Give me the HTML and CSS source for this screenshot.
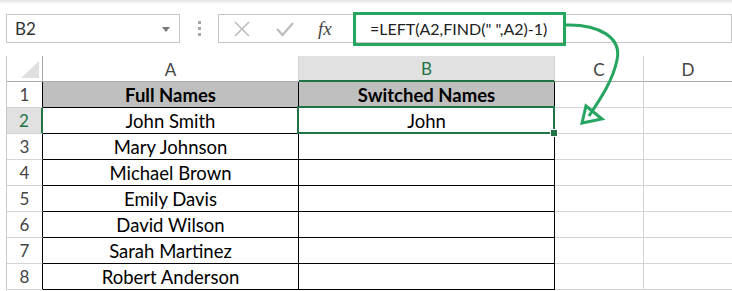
FILE: index.html
```html
<!DOCTYPE html>
<html>
<head>
  <meta charset="UTF-8">
  <title>LEFT + FIND</title>
  <link rel="stylesheet" href="styles.css">
</head>
<body>

  <div class="top-strip"></div>

  <div class="formula-bar">
    <div class="name-box">
      <span>B2</span>
      <svg class="caret" width="8" height="5" viewBox="0 0 8 5"><path d="M0 0 L8 0 L4 5 Z" fill="#7a7a7a"/></svg>
    </div>
    <div class="grip"><i></i><i></i><i></i></div>
    <div class="fx-buttons">
      <svg width="16" height="16" viewBox="0 0 16 16"><path d="M1 1 L15 15 M15 1 L1 15" stroke="#bdbdbd" stroke-width="1.6" fill="none"/></svg>
      <svg width="18" height="16" viewBox="0 0 18 16"><path d="M1 8 L6.5 14 L17 2" stroke="#bdbdbd" stroke-width="2.2" fill="none"/></svg>
      <span class="fx">fx</span>
    </div>
    <div class="formula-input">
      <span class="formula-text">=LEFT(A2,FIND(" ",A2)-1)</span>
    </div>
  </div>

  <div class="sheet">
    <div class="corner"></div>
    <div class="col-head">A</div>
    <div class="col-head active">B</div>
    <div class="col-head">C</div>
    <div class="col-head">D</div>

    <div class="row-head">1</div>
    <div class="cell title">Full Names</div>
    <div class="cell title">Switched Names</div>
    <div class="blank"></div>
    <div class="blank"></div>

    <div class="row-head active">2</div>
    <div class="cell">John Smith</div>
    <div class="cell selected">John<span class="handle"></span></div>
    <div class="blank"></div>
    <div class="blank"></div>

    <div class="row-head">3</div>
    <div class="cell">Mary Johnson</div>
    <div class="cell"></div>
    <div class="blank"></div>
    <div class="blank"></div>

    <div class="row-head">4</div>
    <div class="cell">Michael Brown</div>
    <div class="cell"></div>
    <div class="blank"></div>
    <div class="blank"></div>

    <div class="row-head">5</div>
    <div class="cell">Emily Davis</div>
    <div class="cell"></div>
    <div class="blank"></div>
    <div class="blank"></div>

    <div class="row-head">6</div>
    <div class="cell">David Wilson</div>
    <div class="cell"></div>
    <div class="blank"></div>
    <div class="blank"></div>

    <div class="row-head">7</div>
    <div class="cell">Sarah Martinez</div>
    <div class="cell"></div>
    <div class="blank"></div>
    <div class="blank"></div>

    <div class="row-head">8</div>
    <div class="cell">Robert Anderson</div>
    <div class="cell"></div>
    <div class="blank"></div>
    <div class="blank"></div>
  </div>

  <!-- callout arrow from the formula to the result -->
  <svg class="arrow" width="732" height="291" viewBox="0 0 732 291">
    <path d="M565 25 C600 24 622 38 617 60 C613 80 601 98 589 116" stroke="#25a55f" stroke-width="3" fill="none"/>
    <path d="M582 123 L586 106 L602 119 Z" stroke="#25a55f" stroke-width="3" fill="none" stroke-linejoin="miter"/>
  </svg>

</body>
</html>
```

FILE: styles.css
```css
html, body { margin: 0; padding: 0; background: #fff; }
body { position: relative; width: 732px; height: 291px; overflow: hidden; font-family: Lato, "Liberation Sans", sans-serif; color: #000; }

.top-strip { height: 4px; background: linear-gradient(#e4e4e4, #fff); }

.formula-bar { display: flex; align-items: center; height: 29px; margin-top: 10px; padding-left: 6px; }
.name-box { box-sizing: border-box; width: 174px; height: 29px; border: 1px solid #c6c6c6; display: flex; align-items: center; justify-content: space-between; padding: 0 9px 0 8px; font-size: 17px; color: #333; }
.caret { margin-top: 1px; }
.grip { width: 38px; display: flex; flex-direction: column; align-items: center; gap: 3px; }
.grip i { width: 3px; height: 3px; background: #a8a8a8; }
.fx-buttons { box-sizing: border-box; width: 137px; height: 29px; border: 1px solid #c6c6c6; display: flex; align-items: center; gap: 26px; padding-left: 15px; }
.fx { font-family: "Liberation Serif", serif; font-style: italic; font-size: 19px; color: #444; margin-left: -2px; }
.formula-input { position: relative; flex: 1; height: 29px; box-sizing: border-box; border: 1px solid #c6c6c6; border-left: none; }
.formula-text { position: absolute; left: -2px; top: -3px; width: 213px; height: 34px; box-sizing: border-box; border: 3px solid #25a55f; padding-left: 14px; line-height: 28px; font-size: 16px; color: #222; white-space: pre; }

.sheet { display: grid; grid-template-columns: 36px 256px 256px 89px 89px; grid-auto-rows: 26px; margin: 13px 0 0 6px; border-left: 1px solid #c8c8c8; }
.sheet > div { box-sizing: border-box; border-right: 1px solid #d4d4d4; border-bottom: 1px solid #d4d4d4; display: flex; align-items: center; justify-content: center; }

.corner { position: relative; border-bottom-color: #ababab !important; border-right-color: #ababab !important; }
.corner::after { content: ""; position: absolute; right: 3px; bottom: 3px; width: 0; height: 0; border-left: 18px solid transparent; border-bottom: 17px solid #dfdfdf; }

.col-head { font-size: 17px; color: #444; border-bottom-color: #ababab !important; padding-top: 1px; }
.col-head.active { background: #e1e1e1; color: #217346; border-bottom: 2px solid #217346 !important; }

.row-head { font-size: 17px; color: #444; border-right-color: #000 !important; }
.row-head.active { background: #e1e1e1; color: #217346; border-right: 2px solid #217346 !important; }

.cell { font-size: 18.5px; border-right-color: #000 !important; border-bottom-color: #000 !important; }
.cell.title { background: #bfbfbf; font-weight: bold; }
.cell.selected { position: relative; }
.cell.selected::after { content: ""; position: absolute; left: -2px; top: -2px; right: -1px; bottom: -1px; border: 2px solid #217346; }
.handle { position: absolute; right: -4px; bottom: -4px; width: 6px; height: 6px; background: #217346; border: 1px solid #fff; z-index: 2; }

.arrow { position: absolute; left: 0; top: 0; pointer-events: none; }
```
